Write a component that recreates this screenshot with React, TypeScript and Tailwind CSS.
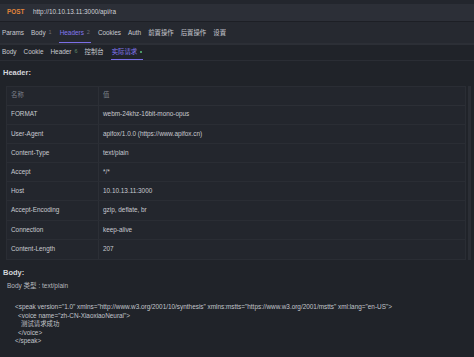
import React from "react";

const mainTabs: { label: string; badge?: string; active?: boolean }[] = [
  { label: "Params" },
  { label: "Body", badge: "1" },
  { label: "Headers", badge: "2", active: true },
  { label: "Cookies" },
  { label: "Auth" },
  { label: "前置操作" },
  { label: "后置操作" },
  { label: "设置" },
];

const subTabs: { label: string; badge?: string; active?: boolean; dot?: boolean }[] = [
  { label: "Body" },
  { label: "Cookie" },
  { label: "Header", badge: "6" },
  { label: "控制台" },
  { label: "实际请求", active: true, dot: true },
];

const headers: [string, string][] = [
  ["FORMAT", "webm-24khz-16bit-mono-opus"],
  ["User-Agent", "apifox/1.0.0 (https://www.apifox.cn)"],
  ["Content-Type", "text/plain"],
  ["Accept", "*/*"],
  ["Host", "10.10.13.11:3000"],
  ["Accept-Encoding", "gzip, deflate, br"],
  ["Connection", "keep-alive"],
  ["Content-Length", "207"],
];

export default function App() {
  return (
    <div
      className="w-[474px] h-[357px] overflow-hidden bg-[#202329] text-[#c8cad0] text-[6.4px] leading-none"
      style={{ fontFamily: '"Liberation Sans", "Noto Sans CJK SC", sans-serif' }}
    >
      {/* top strip */}
      <div className="h-[4px] bg-[#23262d]" />

      {/* URL bar */}
      <div className="h-[18px] bg-[#2c2f37] flex items-center border-b border-[#1d1f25]">
        <span className="ml-[7px] w-[26px] font-bold text-[#e0843a]">POST</span>
        <span className="text-[#cfd1d6]">http://10.10.13.11:3000/api/ra</span>
      </div>

      {/* main tabs */}
      <div className="h-[23px] bg-[#262930] flex items-end gap-[7px] pl-[2px] border-b-2 border-[#2c2f36]">
        {mainTabs.map((t) => (
          <div
            key={t.label}
            className={`h-[17px] flex items-start gap-[3px] pt-[4px] ${
              t.active ? "border-b border-[#7b6ee6] text-[#8478f0] px-[1px]" : ""
            }`}
          >
            <span>{t.label}</span>
            {t.badge && <span className="text-[#6b6f78] text-[5.5px]">{t.badge}</span>}
          </div>
        ))}
      </div>

      {/* sub tabs */}
      <div className="h-[16px] flex items-end gap-[7px] pl-[2px] border-b border-[#2a2d34]">
        {subTabs.map((t) => (
          <div
            key={t.label}
            className={`h-[14px] flex items-start gap-[3px] pt-[3px] ${
              t.active ? "border-b border-[#7b6ee6] text-[#8478f0] px-[1px]" : ""
            }`}
          >
            <span>{t.label}</span>
            {t.badge && <span className="text-[#5f8a6a] text-[5.5px]">{t.badge}</span>}
            {t.dot && <span className="mt-[1.5px] w-[2px] h-[2px] rounded-full bg-[#5bbf7a]" />}
          </div>
        ))}
      </div>

      {/* Header label */}
      <div className="pl-[3px] pt-[8px] pb-[9px] text-[7.5px] font-bold text-[#d3d5da]">Header:</div>

      {/* table */}
      <div className="flex">
        <div className="ml-[6px] w-[460px] border border-[#2a2d34] bg-[#23262d]">
          <div className="flex h-[19px] items-center border-b border-[#2c2f36] text-[#7d818a]">
            <div className="w-[92px] h-full flex items-center pl-[4px] border-r border-[#2c2f36]">名称</div>
            <div className="pl-[4px]">值</div>
          </div>
          {headers.map(([k, v], i) => (
            <div
              key={k}
              className={`flex h-[19.2px] items-center ${i < headers.length - 1 ? "border-b border-[#2a2d34]" : ""}`}
            >
              <div className="w-[92px] h-full flex items-center pl-[4px] border-r border-[#2c2f36]">{k}</div>
              <div className="pl-[4px]">{v}</div>
            </div>
          ))}
        </div>
        <div className="ml-[2px] w-[3px] h-[174px] bg-[#2b2e35]" />
      </div>

      {/* Body */}
      <div className="pl-[3px] pt-[9px] text-[7.5px] font-bold text-[#d3d5da]">Body:</div>
      <div className="pl-[7px] pt-[6px] text-[#b5b8be] text-[6.5px]">Body 类型 : text/plain</div>

      <div className="pl-[15px] pt-[14px] text-[6.4px] leading-[8.5px] text-[#c2c5cb]">
        <div>{'<speak version="1.0" xmlns="http://www.w3.org/2001/10/synthesis" xmlns:mstts="https://www.w3.org/2001/mstts" xml:lang="en-US">'}</div>
        <div className="pl-[3px]">{'<voice name="zh-CN-XiaoxiaoNeural">'}</div>
        <div className="pl-[6px]">测试请求成功</div>
        <div className="pl-[3px]">{"</voice>"}</div>
        <div>{"</speak>"}</div>
      </div>
    </div>
  );
}
